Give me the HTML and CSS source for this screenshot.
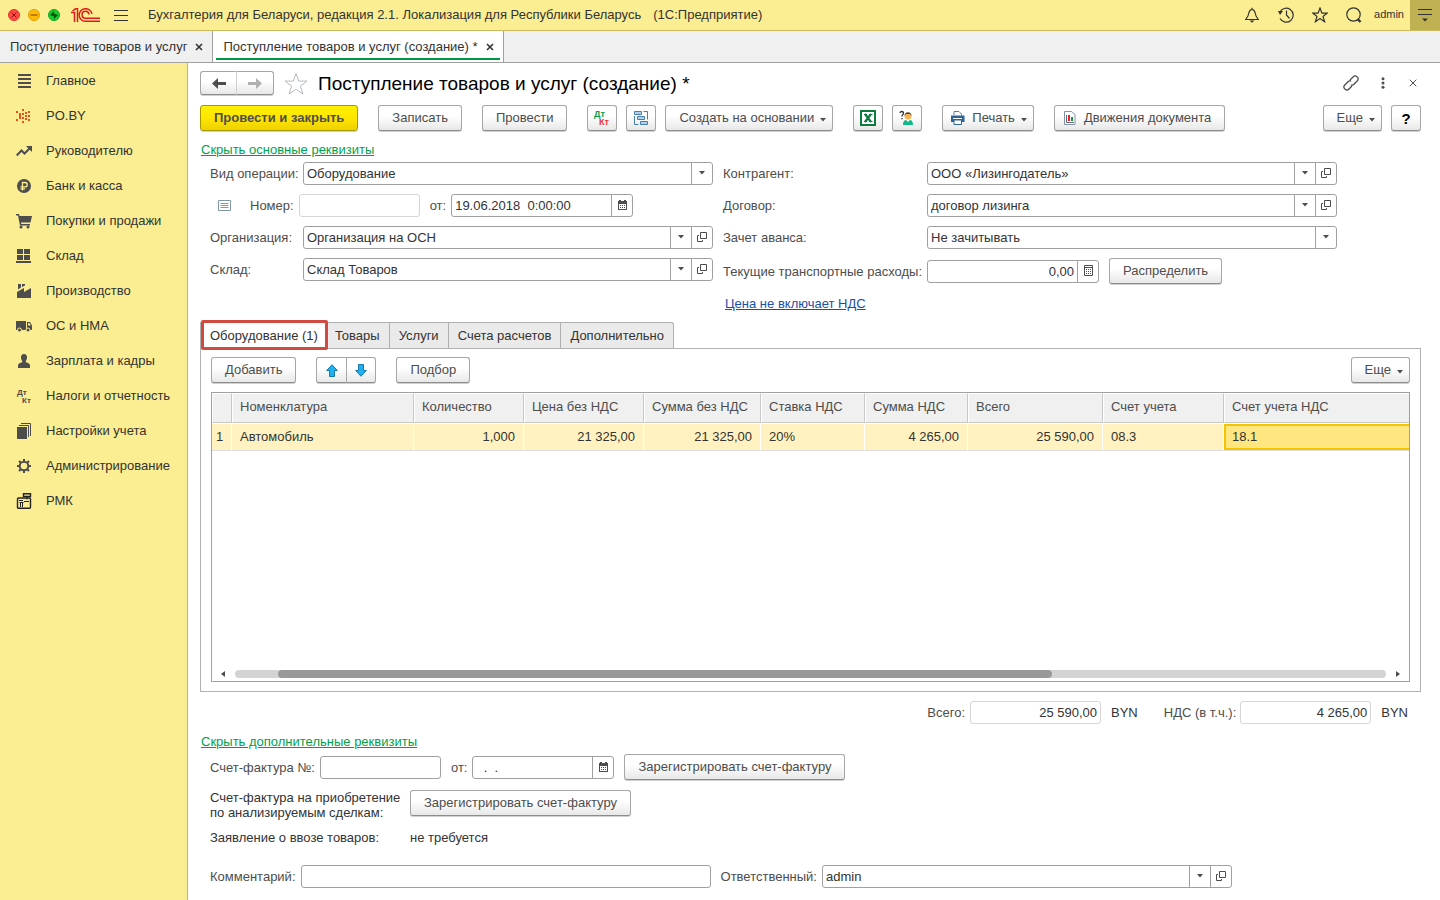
FILE: index.html
```html
<!DOCTYPE html>
<html lang="ru">
<head>
  <meta charset="UTF-8">
  <meta name="viewport" content="width=device-width, initial-scale=1.0">
  <title>Поступление товаров и услуг (создание)</title>
  <link rel="stylesheet" href="styles.css">
</head>
<body>
  <!-- Shared icons -->
  <svg class="sprite" aria-hidden="true">
    <symbol id="caret" viewBox="0 0 6 4"><path d="M0 0h6L3 3.500z" fill="#4d4d4d"/></symbol>
    <symbol id="open" viewBox="0 0 10 10"><path d="M3.500.5h6v6h-6zM2 3.500H.5v6h5V8" fill="none" stroke="#4d4d4d"/></symbol>
    <symbol id="calendar" viewBox="0 0 9 10"><path d="M0 1h9v9H0z" fill="#4d4d4d"/><path d="M1 0h2v2H1zM6 0h2v2H6z" fill="#4d4d4d"/><path d="M1 4h7v5H1z" fill="#fff"/><path d="M2 5h1v1H2zM4 5h1v1H4zM6 5h1v1H6zM2 7h1v1H2zM4 7h1v1H4zM6 7h1v1H6z" fill="#4d4d4d"/></symbol>
    <symbol id="calc" viewBox="0 0 9 11"><path d="M.5.5h8v10h-8zM1 2.500h7" fill="none" stroke="#4d4d4d"/><path d="M2 4h1v1H2zM4 4h1v1H4zM6 4h1v1H6zM2 6h1v1H2zM4 6h1v1H4zM6 6h1v1H6zM2 8h1v1H2zM4 8h1v1H4zM6 8h1v1H6z" fill="#4d4d4d"/></symbol>
    <symbol id="cross" viewBox="0 0 8 8"><path d="M1 1l6 6M7 1L1 7" fill="none" stroke="currentColor" stroke-width="1.600"/></symbol>
  </svg>

  <header class="topbar">
    <div class="window-buttons">
      <button class="round" aria-label="Закрыть"><svg width="12" height="12"><circle cx="6" cy="6" r="5.500" fill="#ff4a43" stroke="#e0352f"/><path d="M3.500 3.500l5 5M8.500 3.500l-5 5" stroke="#8a1410"/></svg></button>
      <button class="round" aria-label="Свернуть"><svg width="12" height="12"><circle cx="6" cy="6" r="5.500" fill="#ffba08" stroke="#e09c00"/><path d="M2.500 6h7" stroke="#a86400" stroke-width="1.500"/></svg></button>
      <button class="round" aria-label="Развернуть"><svg width="12" height="12"><circle cx="6" cy="6" r="5.500" fill="#14cc2c" stroke="#0cab22"/><path d="M6 2v5.500L2 6zM6 10V4.500L10 6z" fill="#04550f"/></svg></button>
    </div>
    <svg class="logo" width="29" height="15" viewBox="0 0 29 15" fill="none" stroke="#e01b1b" stroke-width="1.500"><path d="M0 4.500h3.500V14M1.500 3L4.500.8h2V14"/><path d="M21 6A6.500 6.300 0 1 0 14.500 13.300H29"/><path d="M18 6.500A3.500 3.500 0 1 0 14.500 10.300H29"/></svg>
    <button class="plain menu" aria-label="Меню"><svg width="14" height="12" stroke="#333"><path d="M0 1.500h14M0 6.500h14M0 11.500h14"/></svg></button>
    <div class="app-title"><span>Бухгалтерия для Беларуси, редакция 2.1. Локализация для Республики Беларусь</span><span>(1С:Предприятие)</span></div>
    <div class="topbar-tools">
      <button class="plain" aria-label="Уведомления"><svg width="16" height="16" fill="none" stroke="#333" stroke-width="1.200"><path d="M1 12.500h14M2 12c2-2 2.500-3.500 3-6.500C5.500 3.500 6.500 2.500 8 2.500s2.500 1 3 3c.5 3 1 4.500 3 6.500M8 .8v1.700"/><path d="M5.500 13.500h5L8 15.800z" fill="#333" stroke="none"/></svg></button>
      <button class="plain" aria-label="История"><svg width="16" height="16" fill="none" stroke="#333" stroke-width="1.200"><path d="M1.700 5.500A7 7 0 1 1 2 11.500M8.500 3.500V8l3 3.500"/><path d="M0 4h5L2 8z" fill="#333" stroke="none"/></svg></button>
      <button class="plain" aria-label="Избранное"><svg width="16" height="16" fill="none" stroke="#333" stroke-width="1.200"><path d="M8 1l1.900 5.100h5.400l-4.300 3.300 1.600 5.300L8 11.500l-4.600 3.200L5 9.400.7 6.100h5.400z"/></svg></button>
      <button class="plain" aria-label="Поиск"><svg width="16" height="16" fill="none" stroke="#333" stroke-width="1.200"><circle cx="7.500" cy="7.500" r="6.700"/><path d="M11.500 12l3 3" stroke-width="2.400"/></svg></button>
      <a class="user" href="#">admin</a>
      <button class="service" aria-label="Сервис"><svg width="14" height="14" stroke="#333"><path d="M0 1.500h14M0 6.500h14"/><path d="M4 10.500h6l-3 3z" fill="#333" stroke="none"/></svg></button>
    </div>
  </header>

  <nav class="window-tabs">
    <div class="window-tab"><a href="#">Поступление товаров и услуг</a><button class="plain" aria-label="Закрыть вкладку"><svg width="8" height="8"><use href="#cross"/></svg></button></div>
    <div class="window-tab current"><a href="#">Поступление товаров и услуг (создание) *</a><button class="plain" aria-label="Закрыть вкладку"><svg width="8" height="8"><use href="#cross"/></svg></button></div>
  </nav>

  <div class="workspace">
    <nav class="sidebar">
      <a href="#"><svg width="16" height="16" stroke="#4d4d4d" stroke-width="2"><path d="M2 2h13M2 6h13M2 10h13M2 14h13"/></svg>Главное</a>
      <a href="#"><svg width="16" height="16" fill="#e8501c"><path d="M6 1h2v2H6zM6 5h2v2H6zM6 9h2v2H6zM6 13h2v2H6zM0 3h2v2H0zM0 11h2v2H0zM3 5h2v2H3zM3 9h2v2H3zM9 4h2v2H9zM9 10h2v2H9zM12 3h2v2h-2zM12 11h2v2h-2zM3 7h2v2H3zM9 7h2v2H9zM12 7h2v2h-2z"/></svg>PO.BY</a>
      <a href="#"><svg width="16" height="16" fill="none" stroke="#4d4d4d" stroke-width="2"><path d="M.7 12.500L5.500 7.500 8.500 10.500 14 5"/><path d="M10 3h6v6z" fill="#4d4d4d" stroke="none"/></svg>Руководителю</a>
      <a href="#"><svg width="16" height="16"><circle cx="8" cy="8" r="7" fill="#4d4d4d"/><path d="M6.500 12.500V4.500H9a2.200 2.200 0 0 1 0 4.400H4.500M4.500 10.800H9" fill="none" stroke="#fbed91" stroke-width="1.300"/></svg>Банк и касса</a>
      <a href="#"><svg width="16" height="16" fill="#4d4d4d"><path d="M0 1h3l.6 2H16l-1.500 6.500H5l.3 1.500H14v1.500H4L2 2.500H0z"/><circle cx="5" cy="14" r="1.500"/><circle cx="12" cy="14" r="1.500"/></svg>Покупки и продажи</a>
      <a href="#"><svg width="16" height="16" fill="#4d4d4d"><path d="M1 1h6v5H1zM8 1h6v5H8zM1 7h6v5H1zM8 7h6v5H8zM0 13h15v2H0z"/></svg>Склад</a>
      <a href="#"><svg width="16" height="16" fill="#4d4d4d"><path d="M1 15V9l7-4v4l7-4v10zM2 1h3v3.500L2 6.500zM6 1h3v1.500L6 4z"/></svg>Производство</a>
      <a href="#"><svg width="16" height="16" fill="#4d4d4d"><path d="M0 3h10v9H0z"/><path d="M11 4h3l2 3.500V12h-5z"/><path d="M12 5.200h1.700l1 2.300H12z" fill="#fbed91"/><circle cx="3.500" cy="12" r="2" stroke="#fbed91"/><circle cx="12" cy="12" r="2" stroke="#fbed91"/></svg>ОС и НМА</a>
      <a href="#"><svg width="16" height="16" fill="#4d4d4d"><path d="M8 1c2 0 3 1.500 3 3.500S9.800 8 9.800 8v1.300C12.500 10 14 11 14 12.500V15H2v-2.500C2 11 3.500 10 6.200 9.300V8S5 6.500 5 4.500 6 1 8 1z"/></svg>Зарплата и кадры</a>
      <a href="#"><svg class="dtkt" width="16" height="16" fill="#4d4d4d"><text x="1" y="7">Дт</text><text x="6" y="15">Кт</text></svg>Налоги и отчетность</a>
      <a href="#"><svg width="16" height="16"><path d="M1 4h10v12H1z" fill="#4d4d4d"/><path d="M3 2.500h9.500V14M5 .5h9.500V13" fill="none" stroke="#4d4d4d"/></svg>Настройки учета</a>
      <a href="#"><svg width="16" height="16" fill="none" stroke="#4d4d4d"><circle cx="8" cy="8" r="4.300" stroke-width="2"/><path d="M8 1v2.500M8 12.500V15M1 8h2.500M12.500 8H15M3 3l1.800 1.800M11.200 11.200L13 13M13 3l-1.800 1.800M4.800 11.200L3 13" stroke-width="2"/></svg>Администрирование</a>
      <a href="#"><svg width="16" height="16" fill="none" stroke="#222"><rect x="1.500" y="5" width="13" height="10.300" rx="1" stroke-width="1.400"/><path d="M7.500.7h7v2.800h-7z" fill="#fbed91" stroke-width="1.400"/><path d="M11 4v2.500M3 7.500h4M4.500 9v5M6.500 9v5M3.500 9.500h4M8 8.500h5"/></svg>РМК</a>
    </nav>

    <main class="document">
      <div class="doc-head">
        <div class="pair">
          <button class="btn" aria-label="Назад"><svg width="14" height="11"><path d="M0 5.500L6 0v4h8v3H6v4z" fill="#4d4d4d"/></svg></button>
          <button class="btn" aria-label="Вперед"><svg width="14" height="11"><path d="M14 5.500L8 0v4H0v3h8v4z" fill="#b0b0b0"/></svg></button>
        </div>
        <button class="plain favorite" aria-label="В избранное"><svg width="24" height="24" fill="none" stroke="#b4bcc4"><path d="M12 1.500l2.700 7.600h8.300l-6.600 5 2.400 7.900L12 17.200 5.200 22l2.400-7.900L1 9.100h8.300z"/></svg></button>
        <h1>Поступление товаров и услуг (создание) *</h1>
        <div class="doc-tools">
          <button class="plain" aria-label="Ссылка"><svg width="16" height="16" fill="none" stroke="#4d4d4d" stroke-width="1.300"><path d="M7 5l3-3a2.900 2.900 0 0 1 4.200 4l-3.200 3.200a2.800 2.800 0 0 1-3 .6M9 11l-3 3a2.900 2.900 0 0 1-4.200-4L5 6.800a2.800 2.800 0 0 1 3-.6"/></svg></button>
          <button class="plain" aria-label="Действия"><svg width="4" height="12" fill="#4d4d4d"><circle cx="2" cy="1.800" r="1.500"/><circle cx="2" cy="6" r="1.500"/><circle cx="2" cy="10.200" r="1.500"/></svg></button>
          <button class="plain" aria-label="Закрыть документ"><svg width="8" height="8" stroke="#4d4d4d"><path d="M.7.7l6.600 6.600M7.300.7L.7 7.300"/></svg></button>
        </div>
      </div>

      <div class="toolbar">
        <button class="btn primary">Провести и закрыть</button>
        <button class="btn">Записать</button>
        <button class="btn">Провести</button>
        <div class="group">
          <button class="btn icon" aria-label="Проводки"><svg class="dtkt-color" width="18" height="18"><text x="1" y="8" fill="#0a9b46">Дт</text><text x="6" y="16" fill="#f03038">Кт</text></svg></button>
          <button class="btn icon" aria-label="Структура подчиненности"><svg width="16" height="16" fill="#b4cfe6" stroke="#4580b0"><path d="M1.500 1.500h7v3h-7zM4.500 6.500h7v3h-7zM7.500 11.500h7v3h-7z"/><path d="M10.500 1.500h4v8M1.500 6v8.500h4" fill="none"/></svg></button>
          <button class="btn drop">Создать на основании<svg width="6" height="4"><use href="#caret"/></svg></button>
        </div>
        <div class="group">
          <button class="btn icon" aria-label="Выгрузить в Excel"><svg width="16" height="16"><path d="M1 1h14v14H1z" fill="#fff" stroke="#0d7b3f" stroke-width="2"/><path d="M5 4l6 8M11 4l-6 8" stroke="#0d7b3f" stroke-width="2.200"/><path d="M4 4.500h3M9.500 4.500h3M4 11.500h3M9.500 11.500h3" stroke="#0d7b3f"/></svg></button>
          <button class="btn icon" aria-label="Консультация"><svg width="16" height="16"><path d="M1 3c.3-2 3.500-2 3.500 0S3 4.500 3 6.500M3 8v1.200" fill="none" stroke="#333" stroke-width="1.300"/><circle cx="9" cy="6" r="3.500" fill="#f5b352"/><path d="M5.500 6C5.500 1 12.500 1 12.500 6L11 4H7z" fill="#444"/><path d="M4 15c0-4 2-5 3-5l2 2 2-2c1 0 3 1 3 5z" fill="#0fb886"/></svg></button>
        </div>
        <button class="btn drop with-icon"><svg width="16" height="16"><path d="M4 5V1.500h5L11.500 4v1.500" fill="#fff" stroke="#5d7f9f"/><path d="M1 5.500h13.500V12H1z" fill="#2f6498"/><path d="M3 8.500h9" stroke="#fff"/><path d="M4 10h7.500v4.500H4z" fill="#fff" stroke="#2f6498"/></svg>Печать<svg width="6" height="4"><use href="#caret"/></svg></button>
        <button class="btn with-icon"><svg width="16" height="16"><path d="M2.500 1.500h7L13 4.500v10H2.500z" fill="#fff" stroke="#8094a8"/><path d="M4.500 5v7.500H12" fill="none" stroke="#667"/><path d="M6 5h2v6H6z" fill="#e8202a"/><path d="M9 7h2v4H9z" fill="#16913c"/></svg>Движения документа</button>
        <div class="group push">
          <button class="btn drop">Еще<svg width="6" height="4"><use href="#caret"/></svg></button>
          <button class="btn icon help" aria-label="Справка">?</button>
        </div>
      </div>

      <a class="toggle" href="#">Скрыть основные реквизиты</a>

      <div class="form">
        <div class="form-col">
          <div class="row">
            <label class="label" for="operation">Вид операции:</label>
            <div class="field grow"><select id="operation"><option>Оборудование</option></select><span class="arrow"><svg width="6" height="4"><use href="#caret"/></svg></span></div>
          </div>
          <div class="row">
            <svg class="list-icon" width="13" height="11" fill="none" stroke="#7e97ad"><path d="M.5.5h12v10H.5zM2.500 3.500h8M2.500 5.500h8M2.500 7.500h8"/></svg>
            <label for="number">Номер:</label>
            <div class="field code readonly"><input id="number" type="text" readonly></div>
            <label class="next" for="date">от:</label>
            <div class="field datetime"><input id="date" type="text" value="19.06.2018  0:00:00"><button class="cell" aria-label="Выбрать дату"><svg width="9" height="10"><use href="#calendar"/></svg></button></div>
          </div>
          <div class="row">
            <label class="label" for="organization">Организация:</label>
            <div class="field grow"><select id="organization"><option>Организация на ОСН</option></select><span class="arrow"><svg width="6" height="4"><use href="#caret"/></svg></span><button class="cell" aria-label="Открыть организацию"><svg width="10" height="10"><use href="#open"/></svg></button></div>
          </div>
          <div class="row">
            <label class="label" for="store">Склад:</label>
            <div class="field grow"><select id="store"><option>Склад Товаров</option></select><span class="arrow"><svg width="6" height="4"><use href="#caret"/></svg></span><button class="cell" aria-label="Открыть склад"><svg width="10" height="10"><use href="#open"/></svg></button></div>
          </div>
        </div>
        <div class="form-col wide-labels">
          <div class="row">
            <label class="label" for="partner">Контрагент:</label>
            <div class="field grow"><select id="partner"><option>ООО «Лизингодатель»</option></select><span class="arrow"><svg width="6" height="4"><use href="#caret"/></svg></span><button class="cell" aria-label="Открыть контрагента"><svg width="10" height="10"><use href="#open"/></svg></button></div>
          </div>
          <div class="row">
            <label class="label" for="contract">Договор:</label>
            <div class="field grow"><select id="contract"><option>договор лизинга</option></select><span class="arrow"><svg width="6" height="4"><use href="#caret"/></svg></span><button class="cell" aria-label="Открыть договор"><svg width="10" height="10"><use href="#open"/></svg></button></div>
          </div>
          <div class="row">
            <label class="label" for="advance">Зачет аванса:</label>
            <div class="field grow"><select id="advance"><option>Не зачитывать</option></select><span class="arrow"><svg width="6" height="4"><use href="#caret"/></svg></span></div>
          </div>
          <div class="row">
            <label class="label" for="transport">Текущие транспортные расходы:</label>
            <div class="field amount"><input id="transport" class="num" type="text" value="0,00"><button class="cell" aria-label="Калькулятор"><svg width="9" height="11"><use href="#calc"/></svg></button></div>
            <button class="btn next">Распределить</button>
          </div>
          <a class="price-link" href="#">Цена не включает НДС</a>
        </div>
      </div>

      <div class="tabs" role="tablist">
        <button class="tab active" role="tab" aria-selected="true">Оборудование (1)<span class="marker"></span></button>
        <button class="tab" role="tab">Товары</button>
        <button class="tab" role="tab">Услуги</button>
        <button class="tab" role="tab">Счета расчетов</button>
        <button class="tab" role="tab">Дополнительно</button>
      </div>

      <section class="panel">
        <div class="toolbar">
          <button class="btn">Добавить</button>
          <div class="pair move">
            <button class="btn" aria-label="Вверх"><svg width="12" height="13"><path d="M6 .7l5.300 5.800H8.500v6h-5v-6H.7z" fill="#1fb0f0" stroke="#1678ae"/></svg></button>
            <button class="btn" aria-label="Вниз"><svg width="12" height="13"><path d="M6 12.300l5.300-5.800H8.500v-6h-5v6H.7z" fill="#1fb0f0" stroke="#1678ae"/></svg></button>
          </div>
          <button class="btn">Подбор</button>
          <button class="btn drop push">Еще<svg width="6" height="4"><use href="#caret"/></svg></button>
        </div>
        <div class="table-frame">
          <table>
            <colgroup>
              <col class="c-line"><col class="c-name"><col class="c-qty"><col class="c-price"><col class="c-sum"><col class="c-rate"><col class="c-vat"><col class="c-total"><col class="c-account"><col>
            </colgroup>
            <thead>
              <tr><th></th><th>Номенклатура</th><th>Количество</th><th>Цена без НДС</th><th>Сумма без НДС</th><th>Ставка НДС</th><th>Сумма НДС</th><th>Всего</th><th>Счет учета</th><th>Счет учета НДС</th></tr>
            </thead>
            <tbody>
              <tr><td>1</td><td>Автомобиль</td><td class="num">1,000</td><td class="num">21 325,00</td><td class="num">21 325,00</td><td>20%</td><td class="num">4 265,00</td><td class="num">25 590,00</td><td>08.3</td><td class="selected">18.1</td></tr>
            </tbody>
          </table>
          <div class="scrollbar">
            <svg width="4" height="6"><path d="M4 0v6L0 3z" fill="#4d4d4d"/></svg>
            <div class="track"><div class="thumb"></div></div>
            <svg width="4" height="6"><path d="M0 0v6l4-3z" fill="#4d4d4d"/></svg>
          </div>
        </div>
      </section>

      <div class="totals">
        <label for="total">Всего:</label>
        <div class="field sum readonly"><input id="total" class="num" type="text" value="25 590,00" readonly></div>
        <span class="currency">BYN</span>
        <label for="vat">НДС (в т.ч.):</label>
        <div class="field sum readonly"><input id="vat" class="num" type="text" value="4 265,00" readonly></div>
        <span class="currency">BYN</span>
      </div>

      <a class="toggle" href="#">Скрыть дополнительные реквизиты</a>

      <div class="extra">
        <div class="row">
          <label for="invoice">Счет-фактура №:</label>
          <div class="field code"><input id="invoice" type="text"></div>
          <label class="next" for="invoice-date">от:</label>
          <div class="field date"><input id="invoice-date" type="text" value="  .  ."><button class="cell" aria-label="Выбрать дату"><svg width="9" height="10"><use href="#calendar"/></svg></button></div>
          <button class="btn next">Зарегистрировать счет-фактуру</button>
        </div>
        <div class="row deals">
          <span class="caption">Счет-фактура на приобретение<br>по анализируемым сделкам:</span>
          <button class="btn">Зарегистрировать счет-фактуру</button>
        </div>
        <div class="row">
          <span class="caption">Заявление о ввозе товаров:</span>
          <span>не требуется</span>
        </div>
        <div class="row footer-row">
          <label for="comment">Комментарий:</label>
          <div class="field grow"><input id="comment" type="text"></div>
          <label class="next" for="responsible">Ответственный:</label>
          <div class="field grow"><select id="responsible"><option>admin</option></select><span class="arrow"><svg width="6" height="4"><use href="#caret"/></svg></span><button class="cell" aria-label="Открыть ответственного"><svg width="10" height="10"><use href="#open"/></svg></button></div>
        </div>
      </div>
    </main>
  </div>
</body>
</html>
```

FILE: styles.css
```css
* {
  box-sizing: border-box;
}

body {
  margin: 0;
  min-height: 100vh;
  display: flex;
  flex-direction: column;
  background: #fff;
  color: #333;
  font: 13px/15px "Liberation Sans", Arial, sans-serif;
}

button, input, select {
  font: inherit;
  color: inherit;
}

button {
  cursor: pointer;
}

svg {
  display: block;
  flex: none;
}

.sprite {
  position: absolute;
  width: 0;
  height: 0;
}

.plain, .round {
  display: flex;
  padding: 0;
  border: none;
  background: none;
}

/* Top bar */
.topbar {
  display: flex;
  align-items: center;
  height: 31px;
  padding-left: 8px;
  background: #fbed91;
  border-bottom: 1px solid #c9ba5c;
}

.window-buttons {
  display: flex;
  gap: 8px;
}

.logo {
  margin-left: 11px;
}

.menu {
  margin: 0 20px 0 14px;
}

.app-title {
  display: flex;
  gap: 12px;
  padding-bottom: 2px;
  white-space: nowrap;
}

.topbar-tools {
  display: flex;
  align-items: center;
  gap: 18px;
  height: 30px;
  margin-left: auto;
}

.user {
  margin: 0 -12px 0 -6px;
  padding-bottom: 2px;
  color: #333;
  font-size: 11px;
  text-decoration: none;
}

.service {
  display: flex;
  align-items: center;
  justify-content: center;
  width: 30px;
  height: 30px;
  padding: 0;
  border: none;
  background: #bfb152;
}

/* Open windows */
.window-tabs {
  display: flex;
  height: 32px;
  background: #f0f0f0;
  border-bottom: 1px solid #a0a0a0;
}

.window-tab {
  display: flex;
  align-items: center;
  gap: 8px;
  padding: 0 9px 0 10px;
  border-right: 1px solid #a0a0a0;
  white-space: nowrap;
}

.window-tab a {
  color: #333;
  text-decoration: none;
}

.window-tab.current {
  position: relative;
  background: #fff;
}

.window-tab.current::after {
  content: "";
  position: absolute;
  left: 3px;
  right: 3px;
  bottom: 2px;
  height: 2px;
  background: #009646;
}

.workspace {
  display: flex;
  flex: 1;
}

/* Sections */
.sidebar {
  flex: none;
  width: 188px;
  background: #fbed91;
  border-right: 1px solid #c4b65c;
}

.sidebar a {
  display: flex;
  align-items: center;
  gap: 14px;
  height: 35px;
  padding-left: 16px;
  color: #333;
  text-decoration: none;
}

.dtkt {
  font-size: 8px;
  font-weight: bold;
}

.dtkt-color {
  font-size: 9px;
  font-weight: bold;
}

/* Document */
.document {
  flex: 1;
  min-width: 0;
  display: flex;
  flex-direction: column;
  padding: 8px 19px 12px 12px;
}

.doc-head {
  display: flex;
  align-items: center;
  height: 25px;
}

.doc-head h1 {
  margin: 0 0 0 10px;
  color: #000;
  font-size: 19px;
  line-height: 25px;
  font-weight: normal;
}

.favorite {
  margin-left: 10px;
}

.doc-tools {
  display: flex;
  align-items: center;
  gap: 22px;
  margin-left: auto;
  padding: 0 4px 2px 0;
}

.doc-tools .plain:last-child {
  margin-left: 2px;
}

.btn {
  display: flex;
  align-items: center;
  height: 26px;
  margin-bottom: 1px;
  padding: 0 13px 1px;
  border: 1px solid #a6a6a6;
  border-bottom-color: #8c8c8c;
  border-radius: 3px;
  background: linear-gradient(#fff 40%, #e8e8e8);
  box-shadow: 0 1px 0 #d0d0d0;
  color: #4d4d4d;
  white-space: nowrap;
}

.btn.primary {
  border-color: #a89800;
  background: linear-gradient(#fff000, #ffe600 50%, #eed000);
  font-weight: bold;
}

.btn.icon {
  justify-content: center;
  width: 30px;
  padding: 0;
}

.btn.help {
  color: #000;
  font-size: 15px;
  font-weight: bold;
}

.btn.drop {
  gap: 6px;
  padding-right: 6px;
}

.btn.drop svg:last-child {
  margin-top: 4px;
}

.btn.with-icon {
  gap: 6px;
  padding-left: 7px;
}

.pair {
  display: flex;
}

.pair .btn {
  justify-content: center;
  width: 37px;
  height: 24px;
  padding: 0;
}

.pair .btn:first-child {
  border-right-color: #d0d0d0;
  border-radius: 3px 0 0 3px;
}

.pair .btn:last-child {
  border-left: none;
  border-radius: 0 3px 3px 0;
}

.pair.move .btn {
  width: 30px;
  height: 26px;
}

.pair.move .btn:first-child {
  width: 31px;
  border-right-color: #a6a6a6;
}

.pair.move .btn:last-child {
  width: 29px;
}

.toolbar {
  display: flex;
  gap: 20px;
  margin-top: 9px;
}

.group {
  display: flex;
  gap: 9px;
}

.push {
  margin-left: auto;
}

.toggle {
  align-self: flex-start;
  margin: 10px 0 5px 1px;
  color: #009f4d;
}

/* Fields */
.form {
  display: grid;
  grid-template-columns: 503fr 614fr;
  gap: 10px;
  padding: 0 84px 0 10px;
}

.form-col {
  display: flex;
  flex-direction: column;
  gap: 9px;
  min-width: 0;
}

.row {
  display: flex;
  align-items: center;
}

label {
  margin-right: 5px;
  color: #4d4d4d;
  white-space: nowrap;
}

.label {
  flex: none;
  width: 88px;
}

.wide-labels .label {
  width: 199px;
}

.next {
  margin-left: 10px;
}

.list-icon {
  margin: 0 19px 0 8px;
}

.field {
  display: flex;
  height: 23px;
  border: 1px solid #a0a0a0;
  border-radius: 3px;
  background: #fff;
}

.field.readonly {
  border-color: #d6d6d6;
}

.field input, .field select {
  flex: 1;
  width: 100%;
  min-width: 0;
  padding: 0 3px;
  border: none;
  outline: none;
  appearance: none;
  background: none;
}

/* The select runs under its arrow so that the whole cell opens the list */
.field select {
  margin-right: -21px;
  padding-right: 24px;
}

.arrow, .cell {
  display: flex;
  flex: none;
  align-items: center;
  justify-content: center;
  width: 21px;
  padding: 0 0 2px;
  border: none;
  border-left: 1px solid #a0a0a0;
  background: none;
}

.arrow {
  pointer-events: none;
}

.grow {
  flex: 1;
  min-width: 0;
}

.code {
  width: 121px;
}

.datetime {
  width: 182px;
}

.date {
  width: 142px;
}

.amount {
  width: 172px;
}

.sum {
  width: 131px;
}

.num {
  text-align: right;
}

.price-link {
  align-self: flex-start;
  margin-left: 2px;
  color: #1a4fa8;
  line-height: 20px;
}

/* Tabs */
.tabs {
  display: flex;
  margin-top: 8px;
}

.tab {
  height: 26px;
  padding: 0 9px 1px;
  border: 1px solid #b0b0b0;
  border-left: none;
  border-bottom: none;
  background: #eaeaea;
  white-space: nowrap;
}

.tab:last-child {
  border-radius: 0 3px 0 0;
}

.tab.active {
  position: relative;
  padding-right: 7px;
  border-left: 1px solid #b0b0b0;
  background: #fff;
}

.marker {
  position: absolute;
  inset: -3px -3px -2px 0;
  border: 3px solid #d04a40;
  border-radius: 2px;
}

.panel {
  flex: 1;
  display: flex;
  flex-direction: column;
  padding: 0 10px 9px;
  border: 1px solid #b0b0b0;
}

.panel .toolbar {
  margin: 8px 0;
}

.table-frame {
  flex: 1;
  display: flex;
  flex-direction: column;
  min-height: 180px;
  border: 1px solid #a0a0a0;
  overflow: hidden;
}

table {
  width: 100%;
  table-layout: fixed;
  border-collapse: separate;
  border-spacing: 0;
}

.c-line { width: 20px; }
.c-name { width: 182px; }
.c-qty { width: 110px; }
.c-price { width: 120px; }
.c-sum { width: 117px; }
.c-rate { width: 104px; }
.c-vat { width: 103px; }
.c-total { width: 135px; }
.c-account { width: 121px; }

th {
  height: 30px;
  padding: 0 7px 3px;
  border: 1px solid #fff;
  border-right-color: #c8c8c8;
  border-bottom-color: #c8c8c8;
  background: #f0f0f0;
  color: #4d4d4d;
  font-weight: normal;
  text-align: left;
  white-space: nowrap;
}

td {
  height: 28px;
  padding: 0 8px 1px;
  border-top: 1px solid #fff;
  border-right: 1px solid #fff;
  border-bottom: 1px solid #dcdcdc;
  background: #fff2c0;
  white-space: nowrap;
}

td:first-child {
  padding: 0 4px 1px;
}

th:last-child, td:last-child {
  border-right: none;
}

td.selected {
  background: #ffe680;
  box-shadow: inset 2px 0 #f5c400, inset 0 2px #f5c400, inset 0 -2px #f5c400;
}

.scrollbar {
  display: flex;
  align-items: center;
  gap: 10px;
  margin-top: auto;
  padding: 0 9px 3px;
}

.track {
  flex: 1;
  height: 8px;
  border-radius: 4px;
  background: #d4d4d4;
}

.thumb {
  width: 67.3%;
  height: 8px;
  margin-left: 3.7%;
  border-radius: 4px;
  background: #999;
}

/* Totals */
.totals {
  display: flex;
  align-items: center;
  justify-content: flex-end;
  margin-top: 9px;
}

.currency {
  margin: 0 13px 0 10px;
}

.currency + label {
  margin-left: 13px;
  margin-right: 4px;
}

.extra {
  padding-left: 10px;
}

.deals {
  align-items: flex-start;
  margin: 9px 0 10px;
}

.caption {
  width: 200px;
}

.footer-row {
  margin-top: 20px;
  padding-right: 189px;
}
```
